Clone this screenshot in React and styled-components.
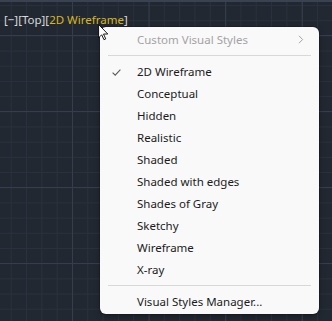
import React from "react"
import styled, { createGlobalStyle } from "styled-components"

const GlobalStyle = createGlobalStyle`
  html, body {
    margin: 0;
    padding: 0;
    background: #222831;
  }
  body {
    font-family: "Noto Sans", "Open Sans", sans-serif;
  }
`

const styles = [
  "2D Wireframe",
  "Conceptual",
  "Hidden",
  "Realistic",
  "Shaded",
  "Shaded with edges",
  "Shades of Gray",
  "Sketchy",
  "Wireframe",
  "X-ray",
]

export default function App() {
  return (
    <>
      <GlobalStyle />
      <Viewport>
        <TopBand />
        <Canvas>
          <ViewLabel>
            [−][Top][<Current>2D Wireframe</Current>]
          </ViewLabel>
          <Cursor viewBox="0 0 12 19" width="11" height="17">
            <path
              d="M0.5 0.5 L0.5 15.5 L4 12 L6.5 17.5 L8.5 16.6 L6 11.2 L10.8 11.2 Z"
              fill="#ffffff"
              stroke="#000000"
              strokeWidth="1"
              strokeLinejoin="round"
            />
          </Cursor>
          <Menu>
            <MenuItem disabled>
              <Label>Custom Visual Styles</Label>
              <svg width="6" height="9" viewBox="0 0 6 9">
                <path d="M1 0.8 L4.6 4.5 L1 8.2" fill="none" stroke="#a3a3a3" strokeWidth="1" />
              </svg>
            </MenuItem>
            <Separator />
            {styles.map((name, i) => (
              <MenuItem key={name}>
                <Check>
                  {i === 0 && (
                    <svg width="9" height="7" viewBox="0 0 9 7">
                      <path d="M0.6 3.6 L3.2 6.1 L8.4 0.7" fill="none" stroke="#5a5a5a" strokeWidth="1.1" />
                    </svg>
                  )}
                </Check>
                <Label>{name}</Label>
              </MenuItem>
            ))}
            <Separator />
            <MenuItem>
              <Check />
              <Label>Visual Styles Manager...</Label>
            </MenuItem>
          </Menu>
        </Canvas>
      </Viewport>
    </>
  )
}

const Viewport = styled.div`
  width: 332px;
  height: 321px;
  display: flex;
  flex-direction: column;
  overflow: hidden;
`

const TopBand = styled.div`
  height: 2px;
  background: #3a4150;
  flex: none;
`

const Canvas = styled.div`
  position: relative;
  flex: 1;
  padding: 10px 0 0 4px;
  background-color: #222831;
  background-image: linear-gradient(to right, #363d4c 1px, transparent 1px),
    linear-gradient(to bottom, #363d4c 1px, transparent 1px),
    linear-gradient(to right, #2a313c 1px, transparent 1px),
    linear-gradient(to bottom, #2a313c 1px, transparent 1px);
  background-size: 76.6px 76px, 76px 76px, 15.32px 15.2px, 15.2px 15.2px;
  background-position: -4.6px 0, 0 33px, -4.6px 0, 0 3px;
`

const ViewLabel = styled.div`
  font-size: 11.5px;
  line-height: 16px;
  color: #d9d9d9;
  white-space: nowrap;
`

const Current = styled.span`
  color: #d8b71e;
`

const Cursor = styled.svg`
  position: absolute;
  left: 98px;
  top: 22px;
  z-index: 2;
`

const Menu = styled.div`
  position: absolute;
  left: 100px;
  top: 25px;
  width: 219px;
  box-sizing: border-box;
  padding: 1px 0 2px;
  background: #f9f9f9;
  border-radius: 6px;
  box-shadow: 0 0 0 1px rgba(0, 0, 0, 0.15), 0 2px 6px rgba(0, 0, 0, 0.3);
  display: flex;
  flex-direction: column;
`

const MenuItem = styled.div`
  height: 22px;
  display: flex;
  align-items: center;
  padding: 0 15px 0 12px;
  font-size: 11.5px;
  color: ${(p) => (p.disabled ? "#a3a3a3" : "#1b1b1b")};
  padding-left: ${(p) => (p.disabled ? "37px" : "12px")};
`

const Check = styled.span`
  width: 25px;
  flex: none;
  display: flex;
  align-items: center;
  padding-top: 2px;
`

const Label = styled.span`
  flex: 1;
  white-space: nowrap;
`

const Separator = styled.div`
  height: 1px;
  margin: 5px 8px 4px;
  background: #d8d8d8;
`
